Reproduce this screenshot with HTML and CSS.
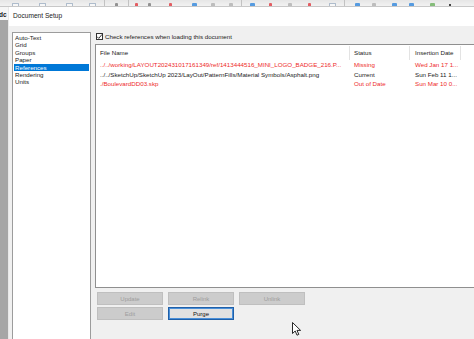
FILE: index.html
```html
<!DOCTYPE html>
<html lang="en">
<head>
<meta charset="UTF-8">
<title>Document Setup</title>
<link rel="stylesheet" href="styles.css">
</head>
<body>

<div class="toolbar">
  <span class="ic out m12"></span>
  <span class="ic out m20"></span>
  <span class="ic out m20"></span>
  <span class="ic out m16"></span>
  <span class="sep m8"></span>
  <span class="ic dark m10"></span>
  <span class="sep m10"></span>
  <span class="ic red m6"></span>
  <span class="ic dark m10"></span>
  <span class="ic red m18"></span>
  <span class="ic blue m20"></span>
  <span class="ic gray m14"></span>
  <span class="ic gray m14"></span>
  <span class="sep m8"></span>
  <span class="ic blue m8"></span>
  <span class="ic red m14"></span>
  <span class="ic gray m16"></span>
  <span class="ic red m16"></span>
  <span class="ic out m18"></span>
  <span class="sep m8"></span>
  <span class="ic blue m10"></span>
  <span class="ic gray m12"></span>
  <span class="ic blue m16"></span>
  <span class="ic blue m12"></span>
  <span class="ic green m16"></span>
  <span class="dot m14"></span>
</div>

<div class="main">
  <div class="app-edge">
    <div class="app-title">dc</div>
  </div>

  <div class="dialog">
    <div class="titlebar">Document Setup</div>

    <div class="dlg-body">
      <ul class="pages">
        <li>Auto-Text</li>
        <li>Grid</li>
        <li>Groups</li>
        <li>Paper</li>
        <li class="sel">References</li>
        <li>Rendering</li>
        <li>Units</li>
      </ul>

      <div class="panel">
        <label class="check">
          <span class="box">
            <svg width="7" height="7" viewBox="0 0 7 7"><path d="M1 3.6 L2.8 5.4 L6 1.4" fill="none" stroke="#222" stroke-width="0.9"/></svg>
          </span>
          Check references when loading this document
        </label>

        <div class="reftable">
          <div class="row head">
            <span class="c-name">File Name</span>
            <span class="c-status">Status</span>
            <span class="c-date">Insertion Date</span>
            <span class="c-rest"></span>
          </div>
          <div class="row bad">
            <span class="c-name">../../working/LAYOUT202431017161349/ref/1413444516_MINI_LOGO_BADGE_216.P...</span>
            <span class="c-status">Missing</span>
            <span class="c-date">Wed Jan 17 1...</span>
          </div>
          <div class="row">
            <span class="c-name">../../SketchUp/SketchUp 2023/LayOut/PatternFills/Material Symbols/Asphalt.png</span>
            <span class="c-status">Current</span>
            <span class="c-date">Sun Feb 11 1...</span>
          </div>
          <div class="row bad">
            <span class="c-name">./BoulevardDD03.skp</span>
            <span class="c-status">Out of Date</span>
            <span class="c-date">Sun Mar 10 0...</span>
          </div>
        </div>

        <div class="buttons">
          <button class="btn" disabled>Update</button>
          <button class="btn" disabled>Relink</button>
          <button class="btn" disabled>Unlink</button>
          <button class="btn" disabled>Edit</button>
          <button class="btn btn-focus">Purge</button>
        </div>
      </div>
    </div>
  </div>
</div>

<svg class="cursor" width="10" height="15" viewBox="0 0 10 15">
  <path d="M0.5 0.5 L0.5 11.5 L3.2 9 L5 13.2 L6.8 12.4 L5 8.4 L8.6 8.4 Z" fill="#fff" stroke="#111" stroke-width="0.9" stroke-linejoin="round"/>
</svg>

</body>
</html>
```

FILE: styles.css
```css
:root{
  --face:#f0f0f0; --line:#b9b9b9; --red:#ee2a2a; --sel:#0078d7;
}
html,body{margin:0;padding:0}
body{width:474px;height:339px;overflow:hidden;position:relative;background:var(--face);
  font-family:"Liberation Sans",Arial,sans-serif;font-size:6.2px;color:#1a1a1a}

/* app toolbar peeking in at the top */
.toolbar{height:6px;display:flex;align-items:flex-end;background:linear-gradient(#e6e6e6,#f2f2f2);
  border-bottom:1px solid #c8c8c8;overflow:hidden}
.ic{width:6px;height:3px;flex:none;border-radius:1px 1px 0 0;opacity:.8}
.ic.out{border:1px solid #9fb0c4;border-bottom:none;height:2px;width:5px;background:#fafafa}
.ic.dark{background:#7a7a7a;width:3px}
.ic.red{background:#e0383e;width:3px}
.ic.blue{background:#2f86dc;width:5px}
.ic.gray{background:#b0b0b0;width:4px}
.ic.green{background:#6cb05e;width:5px}
.sep{width:1px;height:6px;background:#c2c2c2;flex:none}
.dot{width:2px;height:2px;background:#444;flex:none}
.m6{margin-left:6px}.m8{margin-left:8px}.m10{margin-left:10px}.m12{margin-left:12px}
.m14{margin-left:14px}.m16{margin-left:16px}.m18{margin-left:18px}.m20{margin-left:20px}

.main{display:flex;height:332px}
.app-edge{width:8px;flex:none;background:#a6a6a6;display:flex;flex-direction:column}
.app-title{height:13px;background:#f6f6f6;font-weight:700;font-size:6.5px;line-height:16px;
  overflow:hidden;white-space:nowrap;text-indent:-1px}

.dialog{flex:1;display:flex;flex-direction:column;border-left:1px solid #e8e8e8;background:var(--face)}
.titlebar{height:19px;flex:none;background:#fff;font-size:6.6px;line-height:17px;padding-left:4px}
.dlg-body{flex:1;display:flex;gap:4px;padding:6px 0 0 3px;min-height:0}

.pages{list-style:none;margin:0;padding:1px;width:75px;flex:none;background:#fff;border:1px solid #9c9c9c;
  border-bottom:none;line-height:7.4px}
.pages li{padding-left:1px}
.pages li.sel{background:var(--sel);color:#fff}

.panel{flex:1;display:flex;flex-direction:column;min-width:0}
.check{display:flex;align-items:center;gap:2px;height:9px;padding-left:1px;white-space:nowrap}
.box{width:7px;height:7px;border:1px solid #333;background:#fff;box-sizing:border-box;display:flex;
  align-items:center;justify-content:center}
.box svg{flex:none}

.reftable{margin-top:3px;height:244px;background:#fff;border:1px solid #8f8f8f;border-right:none;
  padding-top:1px;box-sizing:border-box}
.row{display:flex;height:9.7px;line-height:9.7px;white-space:nowrap}
.row.head{height:14px;line-height:13px}
.row span{overflow:hidden;flex:none}
.c-name{width:250px;padding-left:4px}
.c-status{width:56px;padding-left:4px}
.c-date{width:46px;padding-left:5px}
.c-rest{flex:1}
.head span{border-right:1px solid #e3e3e3;box-sizing:content-box}
.head .c-name{width:249px}.head .c-status{width:55px}.head .c-date{width:45px}
.head .c-rest{border:none}
.row.bad{color:var(--red)}

.buttons{display:grid;grid-template-columns:repeat(3,66px);column-gap:5px;row-gap:2px;padding:4px 0 0 2px}
.btn{height:13px;margin:0;padding:0;font:inherit;font-size:6px;border:1px solid #bfbfbf;
  background:#cccccc;color:#9d9d9d}
.btn-focus{background:#e1e1e1;color:#111;border:1px solid #1f5fa8;box-shadow:inset 0 0 0 1px #4a8fd8}

.cursor{position:absolute;left:292px;top:322px}
```
